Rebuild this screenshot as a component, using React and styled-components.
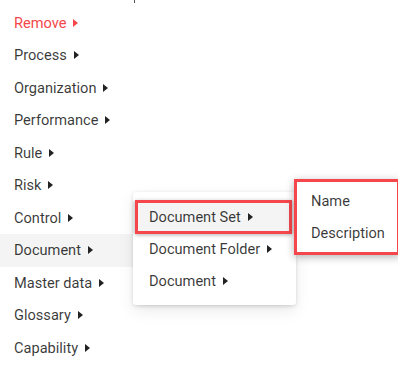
import React from 'react';
import styled, { createGlobalStyle } from 'styled-components';

const Global = createGlobalStyle`
  html, body { margin: 0; padding: 0; background: #fff; }
  body { font-family: Roboto, "Liberation Sans", sans-serif; }
`;

const Stage = styled.div`
  position: relative;
  width: 398px;
  height: 371px;
  overflow: hidden;
  background: #fff;
`;

const Menu = styled.ul`
  list-style: none;
  margin: 0;
  padding: 6.5px 0 0;
  width: 133px;
  display: flex;
  flex-direction: column;
`;

const Item = styled.li`
  display: flex;
  align-items: center;
  height: ${p => p.h || 32.5}px;
  padding-left: ${p => p.indent || 14}px;
  font-size: 14.6px;
  color: ${p => p.danger ? '#f5474b' : 'rgba(0,0,0,0.78)'};
  background: ${p => p.active ? '#f4f4f4' : 'transparent'};
  white-space: nowrap;
  box-sizing: border-box;
`;

const Caret = styled.span`
  display: inline-block;
  margin-left: 7px;
  width: 0;
  height: 0;
  border-top: 4.5px solid transparent;
  border-bottom: 4.5px solid transparent;
  border-left: 5px solid ${p => p.danger ? '#f5474b' : '#222'};
`;

const SubMenu = styled.ul`
  position: absolute;
  left: 133px;
  top: 192px;
  width: 163px;
  margin: 0;
  padding: 8.5px 0 8px;
  list-style: none;
  background: #fff;
  border-radius: 3px;
  box-shadow: 0 3px 6px -4px rgba(0,0,0,0.12), 0 6px 16px 0 rgba(0,0,0,0.08), 0 1px 4px rgba(0,0,0,0.12);
`;

const Marked = styled.div`
  position: absolute;
  left: 2px;
  top: 8px;
  width: 157px;
  height: 34px;
  box-sizing: border-box;
  border: 3px solid #f5474b;
  box-shadow: 0 1px 4px rgba(0,0,0,0.3);
  pointer-events: none;
`;

const LeafMenu = styled.ul`
  position: absolute;
  left: 294px;
  top: 179px;
  width: 106px;
  margin: 0;
  padding: 3px 0;
  list-style: none;
  background: #fff;
  box-sizing: border-box;
  border: 3px solid #f5474b;
  box-shadow: 0 2px 8px rgba(0,0,0,0.3);
`;

const Tick = styled.i`
  position: absolute;
  left: 134px;
  top: 0;
  width: 1px;
  height: 3px;
  background: #555;
`;

const mainItems = [
  'Remove', 'Process', 'Organization', 'Performance', 'Rule', 'Risk',
  'Control', 'Document', 'Master data', 'Glossary', 'Capability',
];

const docItems = ['Document Set', 'Document Folder', 'Document'];

export default function App() {
  return (
    <Stage>
      <Global />
      <Tick />
      <Menu>
        {mainItems.map(name => (
          <Item key={name} danger={name === 'Remove'} active={name === 'Document'}>
            {name}
            <Caret danger={name === 'Remove'} />
          </Item>
        ))}
      </Menu>
      <SubMenu>
        {docItems.map((name, i) => (
          <Item key={name} indent={16} h={32} active={i === 0}>
            {name}
            <Caret />
          </Item>
        ))}
        <Marked />
      </SubMenu>
      <LeafMenu>
        <Item indent={14} h={32}>Name</Item>
        <Item indent={14} h={32}>Description</Item>
      </LeafMenu>
    </Stage>
  );
}
